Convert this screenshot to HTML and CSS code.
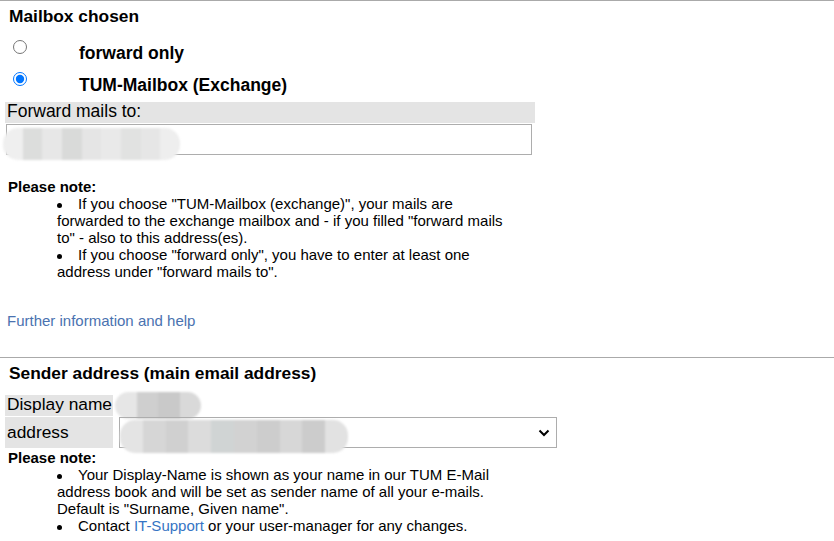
FILE: index.html
```html
<!DOCTYPE html>
<html lang="en">
<head>
<meta charset="utf-8">
<title>Mail settings</title>
<link rel="stylesheet" href="styles.css">
</head>
<body>
<div class="section">
  <h2 class="title">Mailbox chosen</h2>
  <div class="choices">
    <div class="choice">
      <div class="choice-radio"><input type="radio" name="mb" class="radio"></div>
      <label class="choice-label">forward only</label>
    </div>
    <div class="choice">
      <div class="choice-radio"><input type="radio" name="mb" class="radio" checked></div>
      <label class="choice-label">TUM-Mailbox (Exchange)</label>
    </div>
  </div>
  <div class="fwd-label">Forward mails to:</div>
  <div class="fwd-input">
    <span class="blob blob-fwd"><i class="b1"></i><i class="b2"></i><i class="b3"></i><i class="b4"></i><i class="b5"></i><i class="b6"></i><i class="b7"></i><i class="b8"></i><i class="b9"></i></span>
  </div>
  <div class="note-title">Please note:</div>
  <ul class="note-list">
    <li>If you choose "TUM-Mailbox (exchange)", your mails are forwarded to the exchange mailbox and - if you filled "forward mails to" - also to this address(es).</li>
    <li>If you choose "forward only", you have to enter at least one address under "forward mails to".</li>
  </ul>
  <a class="help-link" href="#">Further information and help</a>
</div>
<div class="section section-sender">
  <h2 class="title">Sender address (main email address)</h2>
  <div class="sender-grid">
    <div class="cell-label cell-short">Display name</div>
    <div class="cell-value">
      <span class="blob blob-name"><i class="n1"></i><i class="n2"></i><i class="n3"></i><i class="n4"></i></span>
    </div>
    <div class="cell-label cell-tall">address</div>
    <div class="cell-value">
      <div class="select-box">
        <span class="blob blob-addr"><i class="a1"></i><i class="a2"></i><i class="a3"></i><i class="a4"></i><i class="a5"></i><i class="a6"></i><i class="a7"></i><i class="a8"></i><i class="a9"></i><i class="a10"></i></span>
        <svg class="chevron" width="12" height="8" viewBox="0 0 12 8"><path d="M1.5 1.5 L6 6 L10.5 1.5" fill="none" stroke="#000" stroke-width="2"/></svg>
      </div>
    </div>
  </div>
  <div class="note-title">Please note:</div>
  <ul class="note-list">
    <li>Your Display-Name is shown as your name in our TUM E-Mail address book and will be set as sender name of all your e-mails. Default is "Surname, Given name".</li>
    <li>Contact <a class="inline-link" href="#">IT-Support</a> or your user-manager for any changes.</li>
  </ul>
</div>
</body>
</html>
```
FILE: styles.css
```css
html, body {
  margin: 0;
  padding: 0;
  background: #fff;
}
body {
  font-family: "Liberation Sans", Arial, sans-serif;
  color: #000;
  width: 834px;
  height: 541px;
  overflow: hidden;
}
.section {
  border-top: 1px solid #aaaaaa;
}
.title {
  margin: 0;
  padding: 5px 9px 0;
  font-size: 17.33px;
  line-height: 20px;
  font-weight: bold;
}
.choices {
  margin-top: 11px;
}
.choice {
  display: grid;
  grid-template-columns: 79px auto;
  height: 32px;
}
.choice-radio {
  padding: 3px 0 0 13px;
}
.radio {
  margin: 0;
  width: 14px;
  height: 14px;
  display: block;
}
.choice-label {
  margin-top: 6px;
  font-size: 17.5px;
  line-height: 20px;
  font-weight: bold;
}
.fwd-label {
  margin: 1px 0 0 5px;
  width: 528px;
  height: 21px;
  padding-left: 2px;
  background: #e4e4e4;
  font-size: 17.5px;
  line-height: 18px;
}
.fwd-input {
  position: relative;
  margin: 1px 0 0 6px;
  width: 526px;
  height: 31px;
  box-sizing: border-box;
  border: 1px solid #adadad;
}
.blob {
  position: absolute;
  display: flex;
  overflow: hidden;
  border-radius: 15px;
  filter: blur(1.2px);
}
.blob i {
  display: block;
  flex: 1;
}
.blob-fwd {
  left: -4px;
  top: 3px;
  width: 177px;
  height: 32px;
}
.b1 { background: #efefef; }
.b2 { background: #dcdddc; }
.b3 { background: #e7e7e7; }
.b4 { background: #d9dad9; }
.b5 { background: #e5e5e5; }
.b6 { background: #e9e9e9; }
.b7 { background: #e1e2e1; }
.b8 { background: #e6e6e6; }
.b9 { background: #eeeeee; }
.note-title {
  margin-top: 23px;
  padding-left: 8px;
  font-size: 15px;
  line-height: 17px;
  font-weight: bold;
}
.note-list {
  margin: 0;
  padding: 0 0 0 57px;
  width: 455px;
  list-style: none;
  font-size: 15px;
  line-height: 17px;
}
.note-list li::before {
  content: "";
  display: inline-block;
  width: 5px;
  height: 5px;
  border-radius: 50%;
  background: #000;
  margin-right: 16px;
  vertical-align: 1.5px;
}
.help-link {
  display: block;
  margin-top: 32px;
  padding-left: 7px;
  font-size: 15px;
  line-height: 17px;
  color: #4a72b0;
  text-decoration: none;
}
.section-sender {
  margin-top: 28px;
}
.sender-grid {
  display: grid;
  grid-template-columns: 108px 438px;
  column-gap: 6px;
  row-gap: 1px;
  margin: 12px 0 0 5px;
}
.cell-label {
  background: #e4e4e4;
  padding-left: 2px;
  font-size: 17.33px;
  white-space: nowrap;
  overflow: hidden;
}
.cell-short {
  height: 21px;
  line-height: 19px;
}
.cell-tall {
  height: 31px;
  line-height: 31px;
}
.cell-value {
  position: relative;
}
.blob-name {
  left: -4px;
  top: -3px;
  width: 86px;
  height: 27px;
}
.n1 { background: #e6e6e6; }
.n2 { background: #cfcfcf; }
.n3 { background: #c9c9c9; }
.n4 { background: #d9d9d9; }
.select-box {
  position: relative;
  height: 31px;
  box-sizing: border-box;
  border: 1px solid #adadad;
}
.blob-addr {
  left: 0;
  top: 2px;
  width: 228px;
  height: 33px;
}
.a1 { background: #e4e4e4; }
.a2 { background: #d6d6d6; }
.a3 { background: #d0d0d0; }
.a4 { background: #dcdcdc; }
.a5 { background: #d0d4d4; }
.a6 { background: #d2d2d2; }
.a7 { background: #cdcdcd; }
.a8 { background: #d7d7d7; }
.a9 { background: #cccccc; }
.a10 { background: #e2e2e2; }
.chevron {
  position: absolute;
  right: 6px;
  top: 11px;
}
.section-sender .note-title {
  margin-top: 1px;
}
.inline-link {
  color: #3574c4;
  text-decoration: none;
}
```
